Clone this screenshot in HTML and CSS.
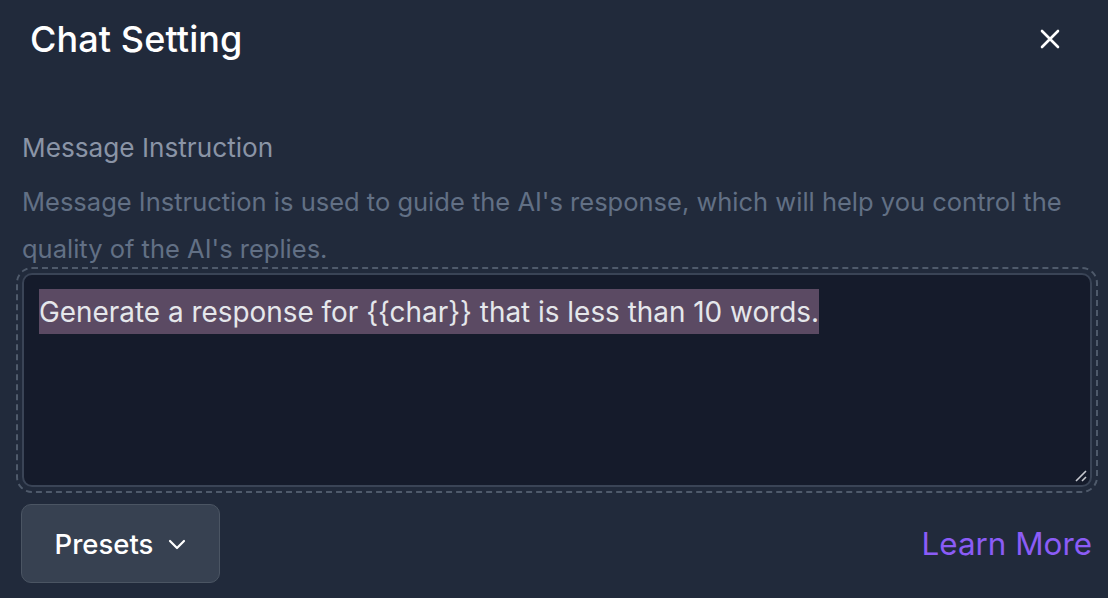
FILE: index.html
```html
<!DOCTYPE html>
<html>
<head>
<meta charset="utf-8">
<link rel="stylesheet" href="styles.css">
</head>
<body>
<div class="dialog">
  <header class="header">
    <h1 class="title">Chat Setting</h1>
    <button class="close" aria-label="Close">
      <svg width="20" height="20" viewBox="0 0 20 20"><path d="M2 2 L18 18 M18 2 L2 18" stroke="#fff" stroke-width="2.6" stroke-linecap="round"/></svg>
    </button>
  </header>
  <section class="field">
    <div class="label">Message Instruction</div>
    <p class="desc">Message Instruction is used to guide the AI's response, which will help you control the quality of the AI's replies.</p>
    <div class="textarea-wrap">
      <div class="textarea"><span class="sel">Generate a response for {{char}} that is less than 10 words.</span></div>
      <svg class="grip" width="14" height="14" viewBox="0 0 14 14"><path d="M2 12 L12 2 M8 12 L12 8" stroke="#c7c9cf" stroke-width="1.6"/></svg>
    </div>
    <div class="actions">
      <button class="presets">Presets
        <svg width="22" height="20" viewBox="0 0 22 20"><path d="M4 7 L11 14 L18 7" fill="none" stroke="#fff" stroke-width="2.2" stroke-linecap="round" stroke-linejoin="round"/></svg>
      </button>
      <a class="learn">Learn More</a>
    </div>
  </section>
</div>
</body>
</html>
```
FILE: styles.css
```css
html, body {
  margin: 0;
  padding: 0;
  background: #212a3b;
  font-family: Inter, "Noto Sans", sans-serif;
  height: 598px;
  overflow: hidden;
}
.dialog {
  padding: 0 16px 0 22px;
}
.header {
  display: flex;
  align-items: center;
  justify-content: space-between;
  height: 78px;
  padding-left: 8px;
  padding-right: 32px;
}
.title {
  margin: 0;
  font-size: 36px;
  font-weight: 500;
  color: #ffffff;
  letter-spacing: 0.1px;
}
.close {
  background: none;
  border: none;
  padding: 0;
  width: 20px;
  height: 20px;
  display: flex;
  margin-top: -1px;
}
.field {
  padding-top: 52px;
}
.label {
  font-size: 26.2px;
  line-height: 36px;
  color: #8a94a6;
}
.desc {
  margin: 12px 0 0;
  font-size: 25.5px;
  line-height: 47px;
  color: #627085;
  padding-right: 10px;
}
.textarea-wrap {
  position: relative;
  margin-top: 1px;
}
.textarea {
  box-sizing: border-box;
  height: 214px;
  background: #151b2b;
  border: 2px solid #3a4456;
  border-radius: 10px;
  outline: 2px dashed #4f5a6b;
  outline-offset: 4px;
  padding: 15px 15px;
  font-size: 27.9px;
  line-height: 45px;
  color: #e5e7eb;
}
.sel {
  background: #5b4a63;
  padding: 6px 0 5px;
}
.grip {
  position: absolute;
  right: 4px;
  bottom: 4px;
}
.actions {
  display: flex;
  align-items: center;
  justify-content: space-between;
  margin-top: 17px;
}
.presets {
  box-sizing: border-box;
  width: 199px;
  height: 79px;
  margin-left: -1px;
  display: flex;
  align-items: center;
  justify-content: center;
  gap: 13px;
  background: #374151;
  border: 1.5px solid #4b5563;
  border-radius: 10px;
  color: #ffffff;
  font-family: Inter, "Noto Sans", sans-serif;
  font-size: 27.5px;
  font-weight: 500;
  padding: 0 0 0 2px;
}
.learn {
  font-size: 31.4px;
  color: #8b5cf6;
}
```
